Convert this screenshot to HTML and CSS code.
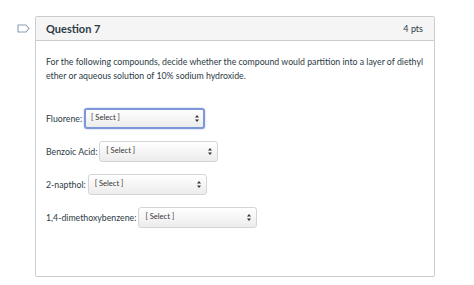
FILE: index.html
```html
<!DOCTYPE html>
<html lang="en">
<head>
  <meta charset="UTF-8" />
  <title>Question 7</title>
  <link rel="stylesheet" href="styles.css">
</head>
<body>
  <div class="quiz">
    <div class="flag">
      <svg width="13" height="9" viewBox="0 0 13 9">
        <path d="M1 1 H9 L12 4.5 L9 8 H1 Z" fill="none" stroke="#8a9fb5" stroke-width="1.1" stroke-linejoin="round"/>
      </svg>
    </div>

    <div class="question">
      <div class="question-header">
        <span class="title">Question 7</span>
        <span class="points">4 pts</span>
      </div>

      <div class="question-body">
        <p class="prompt">For the following compounds, decide whether the compound would partition into a layer of diethyl ether or aqueous solution of 10% sodium hydroxide.</p>

        <div class="answers">
          <div class="answer-row">
            <label>Fluorene:</label>
            <div class="select focused">
              <span>[ Select ]</span>
              <svg class="arrows" width="4" height="7" viewBox="0 0 4 7"><path d="M2 0 L4 2.6 H0 Z M2 7 L4 4.4 H0 Z" fill="#333"/></svg>
            </div>
          </div>
          <div class="answer-row">
            <label>Benzoic Acid:</label>
            <div class="select">
              <span>[ Select ]</span>
              <svg class="arrows" width="4" height="7" viewBox="0 0 4 7"><path d="M2 0 L4 2.6 H0 Z M2 7 L4 4.4 H0 Z" fill="#333"/></svg>
            </div>
          </div>
          <div class="answer-row">
            <label>2-napthol:</label>
            <div class="select">
              <span>[ Select ]</span>
              <svg class="arrows" width="4" height="7" viewBox="0 0 4 7"><path d="M2 0 L4 2.6 H0 Z M2 7 L4 4.4 H0 Z" fill="#333"/></svg>
            </div>
          </div>
          <div class="answer-row">
            <label>1,4-dimethoxybenzene:</label>
            <div class="select">
              <span>[ Select ]</span>
              <svg class="arrows" width="4" height="7" viewBox="0 0 4 7"><path d="M2 0 L4 2.6 H0 Z M2 7 L4 4.4 H0 Z" fill="#333"/></svg>
            </div>
          </div>
        </div>
      </div>
    </div>
  </div>
</body>
</html>
```

FILE: styles.css
```css
body {
  margin: 0;
  background: #fff;
  font-family: Lato, "Open Sans", sans-serif;
  color: #2d3b45;
}

.quiz {
  display: flex;
  padding: 16px 0 0 17px;
}

.flag {
  width: 18px;
  padding-top: 8px;
}

.flag svg {
  display: block;
}

.question {
  width: 398px;
  height: 259px;
  border: 1px solid #c7cdd1;
  border-radius: 2px;
}

.question-header {
  display: flex;
  justify-content: space-between;
  align-items: center;
  height: 23px;
  padding: 0 11px 0 10px;
  background: #f5f5f5;
  border-bottom: 1px solid #c7cdd1;
}

.title {
  font-size: 11px;
  font-weight: bold;
}

.points {
  font-size: 9px;
}

.question-body {
  padding: 14px 4px 0 10px;
}

.prompt {
  margin: 0;
  font-size: 8.75px;
  line-height: 14px;
}

.answers {
  display: flex;
  flex-direction: column;
  gap: 12px;
  margin-top: 25px;
}

.answer-row {
  display: flex;
  align-items: center;
  gap: 2px;
  font-size: 8.75px;
}

.select {
  display: flex;
  justify-content: space-between;
  align-items: center;
  box-sizing: border-box;
  width: 119px;
  height: 21px;
  padding: 0 5px 3px 6px;
  border: 1px solid #d3d6d9;
  border-radius: 3px;
  background: linear-gradient(#ffffff, #ececec);
  font-size: 7.6px;
  color: #333;
}

.select.focused {
  width: 121px;
  border: 2px solid #7e97d8;
  box-shadow: 0 0 2px #a9bbea;
  padding-left: 5px;
  padding-right: 4px;
}

.arrows {
  margin-top: 3px;
}
```
